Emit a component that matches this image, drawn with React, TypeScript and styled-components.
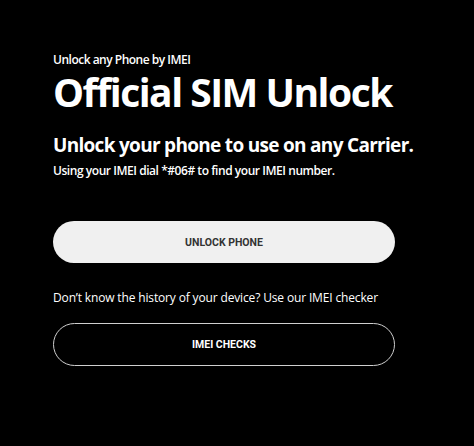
import styled, { createGlobalStyle } from "styled-components";

const GlobalStyle = createGlobalStyle`
  html, body {
    margin: 0;
    padding: 0;
    background: #000;
  }
  body {
    font-family: "Open Sans", "Liberation Sans", sans-serif;
    color: #fff;
  }
`;

const Page = styled.main`
  width: 474px;
  height: 446px;
  background: #000;
  box-sizing: border-box;
  padding: 52px 0 0 53px;
  display: flex;
  flex-direction: column;
  align-items: flex-start;
`;

const Eyebrow = styled.p`
  margin: 0;
  font-size: 12px;
  line-height: 16px;
  font-weight: 600;
  letter-spacing: -0.5px;
`;

const Title = styled.h1`
  margin: 3px 0 0;
  font-size: 39px;
  line-height: 42px;
  font-weight: 700;
  letter-spacing: -1.5px;
`;

const Heading = styled.h2`
  margin: 20px 0 0;
  font-size: 19px;
  line-height: 24px;
  font-weight: 700;
  letter-spacing: -0.7px;
`;

const Text = styled.p<{ $weight?: number; $gap: number; $tracking: number }>`
  margin: ${(p) => p.$gap}px 0 0;
  font-size: 12px;
  line-height: 16px;
  font-weight: ${(p) => p.$weight ?? 400};
  letter-spacing: ${(p) => p.$tracking}px;
`;

const PillButton = styled.button<{ $variant: "solid" | "outline"; $gap: number }>`
  margin-top: ${(p) => p.$gap}px;
  width: 342px;
  height: ${(p) => (p.$variant === "solid" ? 42 : 43)}px;
  border-radius: 22px;
  box-sizing: border-box;
  font-family: Roboto, "Liberation Sans", sans-serif;
  font-size: 10.5px;
  font-weight: 700;
  text-transform: uppercase;
  cursor: pointer;
  background: ${(p) => (p.$variant === "solid" ? "#f0f0f0" : "#000")};
  color: ${(p) => (p.$variant === "solid" ? "#333" : "#fff")};
  border: ${(p) => (p.$variant === "solid" ? "none" : "1.5px solid #cfcfcf")};
`;

export default function App() {
  return (
    <>
      <GlobalStyle />
      <Page>
        <Eyebrow>Unlock any Phone by IMEI</Eyebrow>
        <Title>Official SIM Unlock</Title>
        <Heading>Unlock your phone to use on any Carrier.</Heading>
        <Text $weight={600} $gap={6} $tracking={-0.45}>
          Using your IMEI dial *#06# to find your IMEI number.
        </Text>
        <PillButton $variant="solid" $gap={42}>
          Unlock Phone
        </PillButton>
        <Text $gap={27} $tracking={-0.15}>
          Don’t know the history of your device? Use our IMEI checker
        </Text>
        <PillButton $variant="outline" $gap={17}>
          IMEI Checks
        </PillButton>
      </Page>
    </>
  );
}
